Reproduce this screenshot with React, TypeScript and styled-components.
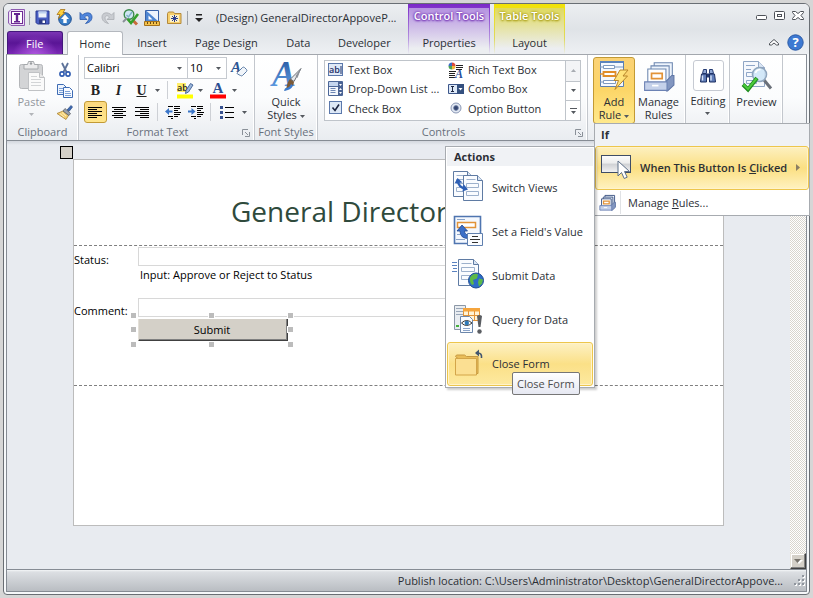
import React from "react";
import styled, { createGlobalStyle, css } from "styled-components";

const GlobalStyle = createGlobalStyle`
  * { box-sizing: border-box; }
  body {
    margin: 0;
    background: #d6d6d6;
    font-family: "Open Sans", "Noto Sans", sans-serif;
    font-size: 11px;
    line-height: 13px;
    color: #2b2f35;
  }
  button, input, select { font: inherit; color: inherit; margin: 0; }
  svg { display: block; flex: none; overflow: visible; }
`;

/* ---------- frame ---------- */

const Page = styled.div`
  min-height: 100vh;
  padding: 3px;
  display: flex;
`;

const WindowFrame = styled.div`
  flex: 1;
  min-width: 0;
  display: flex;
  flex-direction: column;
  border: 1px solid #696e74;
  border-radius: 6px 6px 4px 4px;
  background: #f6f8fa;
`;

const Body = styled.div`
  flex: 1;
  display: flex;
  flex-direction: column;
  margin: 0 2px 2px;
  border: 1px solid #868c94;
  border-top-color: #a3a7ad;
`;

/* ---------- header ---------- */

const Header = styled.header`
  display: flex;
  height: 50px;
  gap: 4px;
  border-radius: 5px 5px 0 0;
  background: linear-gradient(#eceef1, #dfe3e7 50%, #eef0f3);
`;

const HeaderMain = styled.div`
  width: 400px;
  display: flex;
  flex-direction: column;
  justify-content: space-between;
`;

const TitleBar = styled.div`
  display: flex;
  align-items: center;
  height: 27px;
  padding-left: 4px;
`;

const QuickButton = styled.button`
  width: 22px;
  height: 22px;
  padding: 0;
  border: 0;
  background: none;
  display: grid;
  place-items: center;
`;

const QuickTools = styled.div`
  display: flex;
  align-items: center;
  margin-left: 4px;
  padding: 0 2px 0 0;
`;

const Separator = styled.span<{ $h?: number }>`
  width: 1px;
  height: ${(p) => p.$h ?? 14}px;
  background: ${(p) => (p.$h ? "#cdd0d5" : "#9da2a9")};
  flex: none;
`;

const WindowTitle = styled.span`
  padding-left: 6px;
  white-space: nowrap;
`;

const TabRow = styled.nav`
  display: flex;
  height: 23px;
  padding-left: 3px;
`;

const Tab = styled.button<{ $kind?: "file" | "active"; $w: number }>`
  width: ${(p) => p.$w}px;
  height: 23px;
  padding: 0;
  border: 0;
  background: none;
  white-space: nowrap;
  ${(p) =>
    p.$kind === "file" &&
    css`
      color: #fff;
      margin-right: 4px;
      border: 1px solid #43187c;
      border-bottom: 0;
      border-radius: 3px 3px 0 0;
      background: radial-gradient(ellipse at 50% 110%, #b058e0, transparent 60%),
        linear-gradient(#7b35b4, #5a1596 50%, #7a28b4);
    `}
  ${(p) =>
    p.$kind === "active" &&
    css`
      position: relative;
      z-index: 1;
      height: 24px;
      border: 1px solid #b4b8be;
      border-bottom: 0;
      border-radius: 3px 3px 0 0;
      background: #fff;
    `}
`;

const ContextGroup = styled.div<{ $strong: string; $soft: string; $w: number }>`
  width: ${(p) => p.$w}px;
  display: flex;
  flex-direction: column;
  align-items: center;
  justify-content: space-between;
  border: 1px solid;
  border-top: 4px solid ${(p) => p.$strong};
  border-bottom: 0;
  border-image: linear-gradient(${(p) => p.$strong}, ${(p) => p.$soft} 70%, #eceef1) 4 1 0 1;
  background: linear-gradient(${(p) => p.$soft}, #eceef1 88%);
`;

const ContextTitle = styled.span<{ $glow: string }>`
  padding-top: 1px;
  color: #fff;
  font-weight: 600;
  white-space: nowrap;
  text-shadow: 0 0 2px ${(p) => p.$glow}, 0 0 3px ${(p) => p.$glow}, 0 1px 2px ${(p) => p.$glow};
`;

const HeaderSide = styled.div`
  flex: 1;
  display: flex;
  flex-direction: column;
  align-items: flex-end;
  padding: 7px 5px 3px 0;
  justify-content: space-between;
`;

const SideRow = styled.div<{ $gap: number }>`
  display: flex;
  align-items: center;
  gap: ${(p) => p.$gap}px;
`;

const PlainButton = styled.button`
  padding: 0;
  border: 0;
  background: none;
`;

/* ---------- ribbon ---------- */

const Ribbon = styled.div`
  display: flex;
  height: 86px;
  border-bottom: 1px solid #868c94;
  background: linear-gradient(#fff, #fbfcfd 50%, #e9ecf0);
`;

const Group = styled.section<{ $w: number }>`
  width: ${(p) => p.$w}px;
  flex: none;
  display: flex;
  flex-direction: column;
  justify-content: space-between;
  padding-top: 2px;
  border-right: 1px solid #c3c7cd;
  box-shadow: inset -1px 0 #fff;
`;

const GroupContent = styled.div<{ $pad?: string }>`
  display: flex;
  height: 67px;
  padding: ${(p) => p.$pad ?? "0"};
`;

const GroupLabel = styled.div<{ $launcher?: boolean }>`
  position: relative;
  height: 15px;
  padding-right: ${(p) => (p.$launcher ? 18 : 0)}px;
  text-align: center;
  white-space: nowrap;
  color: #68707c;
`;

const Launcher = styled.button`
  position: absolute;
  right: 4px;
  top: 4px;
  padding: 0;
  border: 0;
  background: none;
`;

const BigButton = styled.button<{ $w: number; $on?: boolean; $dim?: boolean }>`
  width: ${(p) => p.$w}px;
  height: 67px;
  flex: none;
  padding: 2px 0 0;
  display: flex;
  flex-direction: column;
  align-items: center;
  gap: 3px;
  border: 1px solid ${(p) => (p.$on ? "#c29a35" : "transparent")};
  border-radius: 3px;
  background: ${(p) => (p.$on ? "linear-gradient(#fbd275, #fcd668 50%, #ffe98c)" : "none")};
  color: ${(p) => (p.$dim ? "#92969c" : "inherit")};
`;

const BigText = styled.span`
  text-align: center;
  svg {
    display: inline-block;
    vertical-align: middle;
    margin-left: 3px;
  }
  br + svg { margin: 0 0 4px; }
`;

const IconColumn = styled.div`
  display: flex;
  flex-direction: column;
  justify-content: space-between;
  padding: 2px 0 1px;
`;

const FormatRows = styled.div`
  display: flex;
  flex-direction: column;
  flex: 1;
`;

const Row = styled.div`
  display: flex;
  align-items: center;
  height: 22px;
`;

const Combo = styled.label<{ $w: number }>`
  width: ${(p) => p.$w}px;
  height: 22px;
  display: flex;
  align-items: center;
  padding-right: 5px;
  border: 1px solid #c6cad0;
  background: #fff;
  & + & { border-left: 0; }
  select {
    flex: 1;
    min-width: 0;
    height: 20px;
    padding: 0 2px 2px;
    border: 0;
    background: none;
    appearance: none;
    color: #000;
  }
`;

const ToolButton = styled.button<{ $w: number; $on?: boolean }>`
  width: ${(p) => p.$w}px;
  height: 22px;
  padding: 0;
  display: flex;
  align-items: center;
  justify-content: center;
  border: 1px solid ${(p) => (p.$on ? "#c29a35" : "transparent")};
  border-radius: 3px;
  background: ${(p) => (p.$on ? "linear-gradient(#fbd87f, #ffe68c)" : "none")};
`;

const Letter = styled.span<{ $style: "bold" | "italic" | "underline" }>`
  font-family: "Liberation Serif", serif;
  font-size: 14px;
  font-weight: bold;
  color: #222;
  font-style: ${(p) => (p.$style === "italic" ? "italic" : "normal")};
  text-decoration: ${(p) => (p.$style === "underline" ? "underline" : "none")};
`;

const Gallery = styled.div`
  display: flex;
  width: 258px;
  height: 61px;
  border: 1px solid #bfc4ca;
  background: #fff;
`;

const GalleryGrid = styled.div`
  flex: 1;
  display: grid;
  grid-template-columns: 120px 1fr;
  grid-template-rows: repeat(3, 1fr);
  padding-bottom: 1px;
`;

const GalleryItem = styled.button`
  display: flex;
  align-items: center;
  gap: 4px;
  padding: 0 0 2px 3px;
  border: 0;
  background: none;
  white-space: nowrap;
`;

const GalleryScroll = styled.div`
  width: 15px;
  display: grid;
  grid-template-rows: repeat(3, 1fr);
  border-left: 1px solid #bfc4ca;
  button {
    display: grid;
    place-items: center;
    padding: 0;
    border: 0;
    background: #fff;
  }
  button + button { border-top: 1px solid #bfc4ca; }
  button:first-child { background: #f3f4f6; }
`;

const IconTile = styled.span`
  width: 31px;
  height: 31px;
  display: grid;
  place-items: center;
  border: 1px solid #c6cad2;
  border-radius: 3px;
  background: #fff;
`;

const MenuAnchor = styled.div`
  position: relative;
`;

/* ---------- menus ---------- */

const menuBox = css`
  position: absolute;
  border: 1px solid #a7abb0;
  background: #fff;
`;

const RuleMenu = styled.div`
  ${menuBox}
  z-index: 3;
  top: 66px;
  left: 1px;
  width: 216px;
`;

const ActionMenu = styled.div`
  ${menuBox}
  z-index: 4;
  top: 22px;
  right: 214px;
  width: 150px;
  padding: 1px;
  box-shadow: 2px 2px 2px rgba(0, 0, 0, 0.2);
`;

const MenuHeading = styled.div<{ $h: number; $pad: number }>`
  height: ${(p) => p.$h}px;
  line-height: ${(p) => p.$h}px;
  padding-left: ${(p) => p.$pad}px;
  font-weight: bold;
  background: #f0f2f5;
`;

const highlight = css`
  border-color: #edc64c;
  border-radius: 3px;
  background: linear-gradient(#fdf1c4, #fbe087 50%, #fde9a0);
  box-shadow: inset 0 0 0 1px #fff3cb;
`;

const RuleItem = styled.button`
  width: 100%;
  height: 44px;
  display: flex;
  align-items: center;
  gap: 7px;
  padding: 0 8px 2px 5px;
  border: 1px solid;
  font-weight: 600;
  white-space: nowrap;
  ${highlight}
  background: linear-gradient(#fdf0c0, #fbdf82 50%, #fff2c0);
  span { flex: 1; text-align: left; }
`;

const ManageItem = styled.button`
  width: 100%;
  height: 25px;
  display: flex;
  align-items: center;
  padding: 0 0 0 4px;
  border: 0;
  background: #fff;
  white-space: nowrap;
  span:last-child { padding-left: 7px; }
`;

const IconRail = styled.span`
  height: 23px;
  padding-right: 4px;
  display: flex;
  align-items: center;
  border-right: 1px solid #e0e2e5;
`;

const ActionItem = styled.button<{ $on?: boolean }>`
  width: 100%;
  height: 44px;
  display: flex;
  align-items: center;
  gap: 8px;
  padding: 0 0 2px 4px;
  border: 1px solid transparent;
  background: none;
  white-space: nowrap;
  ${(p) => p.$on && highlight}
`;

const Tooltip = styled.div`
  position: absolute;
  left: 66px;
  top: 225px;
  padding: 4px;
  border: 1px solid #767676;
  border-radius: 2px;
  background: linear-gradient(#fff, #e6e8f2);
  color: #4c4c4c;
  white-space: nowrap;
`;

/* ---------- work area ---------- */

const WorkArea = styled.main`
  flex: 1;
  display: flex;
  background: linear-gradient(#d3d7de, #e8ebf0 4px);
`;

const Canvas = styled.div`
  flex: 1;
  min-width: 0;
  display: flex;
  padding: 18px 66px 43px;
`;

const Sheet = styled.div`
  position: relative;
  flex: 1;
  min-width: 0;
  border: 1px solid #bcbcbc;
  background: #fff;
  color: #000;
`;

const SheetHandle = styled.span`
  position: absolute;
  left: -14px;
  top: -14px;
  width: 13px;
  height: 13px;
  border: 1px solid #000;
  background: #d4d0c8;
`;

const FormTitle = styled.h1`
  margin: 0;
  height: 85px;
  padding: 33px 0 0 157px;
  font-size: 28px;
  line-height: 36px;
  font-weight: normal;
  color: #2f4a3c;
  white-space: nowrap;
`;

const FormGrid = styled.form`
  height: 141px;
  display: grid;
  grid-template-columns: 64px minmax(0, 450px);
  grid-template-rows: 51px 1fr;
  padding-top: 1px;
  border-top: 1px dashed #808080;
  border-bottom: 1px dashed #808080;
`;

const FieldLabel = styled.label`
  padding-top: 6px;
`;

const Field = styled.input`
  display: block;
  width: 100%;
  height: 19px;
  padding: 0 2px;
  border: 1px solid #d8d8d8;
  background: #fff;
`;

const Hint = styled.div`
  padding: 2px 0 0 2px;
`;

const Selection = styled.div`
  position: relative;
  width: 150px;
  margin-top: 2px;
`;

const SubmitButton = styled.button`
  display: block;
  width: 100%;
  height: 22px;
  padding: 0 2px 0 0;
  border: solid;
  border-width: 0 1px 1px 1px;
  border-color: #d4d0c8 #404040 #404040 #e4e0d8;
  box-shadow: inset -1px -1px #808080;
  background: #d4d0c8;
`;

const Grip = styled.i<{ $x: number; $y: number }>`
  position: absolute;
  left: ${(p) => p.$x}%;
  top: ${(p) => p.$y}%;
  width: 5px;
  height: 5px;
  margin: ${(p) => (p.$y === 0 ? -6 : p.$y === 100 ? 1 : -3)}px 0 0
    ${(p) => (p.$x === 0 ? -7 : p.$x === 100 ? 0 : -4)}px;
  background: #bcbcbc;
  outline: 1px solid #fff;
`;

const ScrollTrack = styled.div`
  width: 16px;
  display: flex;
  flex-direction: column;
  justify-content: flex-end;
  background: repeating-conic-gradient(#d8d5ce 0 25%, #fff 0 50%) 0 0 / 2px 2px;
`;

const ScrollButton = styled.button`
  height: 16px;
  padding: 0;
  display: grid;
  place-items: center;
  border: 1px solid;
  border-color: #e8e5de #404040 #404040 #e8e5de;
  box-shadow: inset -1px -1px #808080, inset 1px 1px #fff;
  background: #d4d0c8;
`;

const StatusBar = styled.footer`
  height: 22px;
  display: flex;
  align-items: center;
  justify-content: flex-end;
  gap: 11px;
  padding-bottom: 1px;
  border-top: 1px solid #868c94;
  background: linear-gradient(#f4f6f8, #dcdfe3 2px, #b9bdc2);
  white-space: nowrap;
`;

/* ---------- icons ---------- */

const Arrow = ({ color = "#55595f" }: { color?: string }) => (
  <svg width="5" height="3" viewBox="0 0 5 3"><path d="M0 0h5L2.500 3z" fill={color} /></svg>
);

const Sheetlet = ({ x, y, w = 19, h = 23 }: { x: number; y: number; w?: number; h?: number }) => (
  <g transform={`translate(${x} ${y})`}>
    <path d={`M.5.5h${w - 6}l5 5v${h - 6}h-${w - 1}z`} fill="#fafcff" stroke="#5f7ba3" />
    <path d={`M${w - 5.5}.5v5h5`} fill="#dbe6f4" stroke="#5f7ba3" />
    <path d={`M3.500 4.500h${w - 11}M3.500 8.500h${w - 8}v4h-${w - 8}zM3.500 16.500h${w - 8}v4h-${w - 8}z`} fill="none" stroke="#9db1cc" />
  </g>
);

const LogoIcon = () => (
  <svg width="17" height="17" viewBox="0 0 17 17">
    <path d="M3 .5h13.500v16H3L.5 14V3z" fill="#ecdff5" stroke="#8d5ab0" />
    <rect x="3.500" y="2.500" width="11" height="12" fill="#fff" stroke="#6d2a94" />
    <path d="M6 4h6v2h-1.800v6H12v1.500H6V12h1.800V6H6z" fill="#642390" />
  </svg>
);
const SaveIcon = () => (
  <svg width="15" height="15" viewBox="0 0 15 15">
    <path d="M1 1h13v13H2.500L1 12.500z" fill="#4a5fc4" stroke="#2b3a92" />
    <path d="M3.500 1.500h8v6h-8z" fill="#eef3fb" />
    <path d="M3.500 1.500h8v2h-8z" fill="#bdd0ee" />
    <path d="M4 9.500h7V14H4z" fill="#2c3a86" /><path d="M7.500 10.500H10V13H7.500z" fill="#fff" />
  </svg>
);
const PublishIcon = () => (
  <svg width="16" height="17" viewBox="0 0 16 17">
    <circle cx="9" cy="10" r="6.300" fill="#3a7fc8" stroke="#1c4d92" />
    <path d="M9 5.500l4 4.500h-2.300v4H7.300v-4H5z" fill="#fff" />
    <path d="M4.500 .5h4.500L7 3.500H9L2.500 9.500 4 5.500H1z" fill="#ffd23c" stroke="#a5721b" strokeWidth=".8" />
  </svg>
);
const UndoIcon = ({ color, edge, flip }: { color: string; edge: string; flip?: boolean }) => (
  <svg width="14" height="14" viewBox="0 0 14 14">
    <g transform={flip ? "translate(14 0) scale(-1 1)" : undefined}>
      <path d="M1 1.500v7h7L5.500 6C7.500 4 10 4.500 10 7c0 2-1.500 3.500-3.500 5.500 4-.8 6.500-3 6.500-6.500C13 1.500 7.500.3 3.500 4z" fill={color} stroke={edge} strokeWidth=".8" />
    </g>
  </svg>
);
const SpellIcon = () => (
  <svg width="17" height="17" viewBox="0 0 17 17">
    <circle cx="7" cy="5.500" r="4.800" fill="#cfe6f3" stroke="#3b8a4c" strokeWidth="1.400" />
    <path d="M4.500 6l2 2 3.500-5" fill="none" stroke="#7fb0c8" strokeWidth="1.400" />
    <path d="M1 13l4-4" stroke="#8a9099" strokeWidth="2" />
    <path d="M10.500 11l4.500 4.500" stroke="#c76a3c" strokeWidth="3" />
    <path d="M5.500 10l3.500 4L16 5" fill="none" stroke="#34a02c" strokeWidth="2.600" />
  </svg>
);
const DesignIcon = () => (
  <svg width="17" height="17" viewBox="0 0 17 17">
    <path d="M1.500 1.500h13v11h-13z" fill="#eef4fd" stroke="#3a62a8" />
    <path d="M14 12L2 1.500V12z" fill="#4f86d2" /><path d="M4.500 10.500v-4l4 4z" fill="#fff" />
    <path d="M.5 12.500h15v4H.5z" fill="#f3c14b" stroke="#a5721b" />
    <path d="M3.500 13v2M6.500 13v2M9.500 13v2M12.500 13v2" stroke="#6b4a10" />
  </svg>
);
const FolderStarIcon = () => (
  <svg width="17" height="14" viewBox="0 0 17 14">
    <path d="M1.500 2.500l1-1.500h5l1 1.500h6.500v10h-13.500z" fill="#f6cf6d" stroke="#b4893a" />
    <rect x="4" y="4" width="9" height="7" fill="#fdf1c6" />
    <path d="M8.500 4v7M5 7.500h7M6 5l5 5M11 5l-5 5" stroke="#2a3f8f" />
  </svg>
);
const CustomizeIcon = () => (
  <svg width="8" height="8" viewBox="0 0 8 8"><path d="M1 0h6v1.500H1zM0 4h8L4 8z" fill="#222" /></svg>
);
const MinIcon = () => (
  <svg width="12" height="8" viewBox="0 0 12 8"><rect x=".5" y="3.500" width="10" height="4" rx="1" fill="#fff" stroke="#4c5057" /></svg>
);
const MaxIcon = () => (
  <svg width="12" height="9" viewBox="0 0 12 9"><rect x=".5" y=".5" width="10" height="8" rx="1" fill="#fff" stroke="#4c5057" /><rect x="3.500" y="3.500" width="4" height="2" fill="#fff" stroke="#4c5057" /></svg>
);
const CloseIcon = () => (
  <svg width="12" height="9" viewBox="0 0 12 9">
    <path d="M.5.5h3l2.500 2 2.500-2h3v1L9 4.500l2.500 3v1h-3L6 6.500l-2.500 2h-3v-1L3 4.500.500 1.500z" fill="#fff" stroke="#4c5057" />
  </svg>
);
const ChevronIcon = () => (
  <svg width="10" height="7" viewBox="0 0 10 7"><path d="M.5 4.500L5 .5l4.500 4v1.500h-2L5 4 2.500 6h-2z" fill="#fff" stroke="#4c5057" /></svg>
);
const HelpIcon = () => (
  <svg width="17" height="17" viewBox="0 0 17 17">
    <circle cx="8.500" cy="8.500" r="7.700" fill="#3d79d2" stroke="#2a5aa6" />
    <text x="8.500" y="13" textAnchor="middle" fontSize="13" fontWeight="bold" fill="#fff">?</text>
  </svg>
);
const PasteIcon = () => (
  <svg width="28" height="32" viewBox="0 0 28 32">
    <rect x="1.500" y="4.500" width="23" height="24" rx="2" fill="#d3d4d6" stroke="#b4b6b9" />
    <path d="M6 4.500h3.500l1-3h5l1 3H20V9H6z" fill="#ebebec" stroke="#a5a8ab" />
    <circle cx="13" cy="3.500" r="1.200" fill="#999ca0" />
    <path d="M10.500 12.500h11l5 5v13h-16z" fill="#fafafa" stroke="#c0c2c5" />
    <path d="M21.500 12.500v5h5" fill="#e8e8e8" stroke="#c0c2c5" />
    <path d="M13 16.500h6M13 19.500h10M13 22.500h10M13 25.500h10" stroke="#d2d4d6" />
  </svg>
);
const CutIcon = () => (
  <svg width="16" height="16" viewBox="0 0 16 16">
    <path d="M5 1l4.500 9M11 1L6.500 10" stroke="#5d7299" strokeWidth="1.800" />
    <circle cx="5" cy="12" r="2.100" fill="none" stroke="#2f5bb0" strokeWidth="1.600" />
    <circle cx="11" cy="12" r="2.100" fill="none" stroke="#2f5bb0" strokeWidth="1.600" />
  </svg>
);
const CopyIcon = () => (
  <svg width="16" height="14" viewBox="0 0 16 14">
    <path d="M.5.5h6l3 3v7h-9z" fill="#eef4fd" stroke="#3e6cb4" /><path d="M2 4.500h5M2 6.500h4M2 8.500h4" stroke="#7ca0d6" />
    <path d="M6.500 3.500h6l3 3v7h-9z" fill="#f7faff" stroke="#3e6cb4" /><path d="M8 7.500h5M8 9.500h6M8 11.500h6" stroke="#7ca0d6" />
  </svg>
);
const BrushIcon = () => (
  <svg width="16" height="15" viewBox="0 0 16 15">
    <path d="M10 5l4-4.500 1.500 1.500L12 6.500z" fill="#3d69b3" stroke="#27497f" strokeWidth=".7" />
    <path d="M6 6l5.500 4.500L9 14.500 0 8.500z" fill="#f4cf73" stroke="#a98436" strokeWidth=".8" />
    <path d="M3 8.500l4 3.500M5 7.500l4 3.500" stroke="#fdf0bf" />
    <path d="M8 3.500l5.500 5-1.500 2L6 6z" fill="#9aa1ac" stroke="#5a5f68" strokeWidth=".8" />
  </svg>
);
const ClearIcon = () => (
  <svg width="17" height="17" viewBox="0 0 17 17">
    <text x="0" y="12" fontFamily="Liberation Serif" fontStyle="italic" fontWeight="bold" fontSize="15" fill="#2c5694">A</text>
    <path d="M6.500 12.500l5-5q1-.8 2 0l2 2q.8 1 0 2l-4 4q-1 .8-2 0l-3-1.500q-.8-.8 0-1.500z" fill="#f1f5fa" stroke="#5a7ba5" />
  </svg>
);
const HighlightIcon = () => (
  <svg width="18" height="17" viewBox="0 0 18 17">
    <rect x="1" y="1" width="9" height="9" fill="#ffee6a" />
    <text x="1" y="9" fontSize="9" fontWeight="600" fill="#222">ab</text>
    <path d="M10 8.500l4.500-7 2.500 1.500-4.500 7-3 1.500z" fill="#9cb6da" stroke="#3d5e92" strokeWidth=".9" />
    <path d="M1 12.500h16v4H1z" fill="#ffff00" />
  </svg>
);
const FontColorIcon = () => (
  <svg width="16" height="17" viewBox="0 0 16 17">
    <text x="8" y="11" textAnchor="middle" fontFamily="Liberation Serif" fontWeight="bold" fontSize="15" fill="#2c4f92">A</text>
    <path d="M0 12.500h16v4H0z" fill="#ff0000" />
  </svg>
);
const AlignIcon = ({ mode }: { mode: "left" | "center" | "right" }) => (
  <svg width="15" height="13" viewBox="0 0 15 13" shapeRendering="crispEdges">
    {[14, 9, 14, 9, 14, 9].map((w, i) => {
      const x = mode === "left" ? 0 : mode === "right" ? 14 - w : Math.floor((14 - w) / 2);
      return <rect key={i} x={x} y={i * 2 + 1} width={w} height="1" fill="#000" />;
    })}
  </svg>
);
const IndentIcon = ({ out }: { out?: boolean }) => (
  <svg width="17" height="14" viewBox="0 0 17 14" shapeRendering="crispEdges">
    <path d="M3 1.500h5M9 1.500h6M9 3.500h6M9 5.500h4M9 7.500h7M9 9.500h6M3 11.500h5M9 11.500h4M6 13.500h2" stroke="#000" />
    <path d={out ? "M0 6.500L4 3v2.500h3.500v2H4V10z" : "M7.500 6.500L3.500 3v2.500H0v2h3.500V10z"} fill="#3b76c8" shapeRendering="auto" />
  </svg>
);
const BulletsIcon = () => (
  <svg width="14" height="13" viewBox="0 0 14 13">
    <path d="M5 1.500h9M5 6.500h9M5 11.500h9" stroke="#000" />
    <path d="M0 0h3v3H0zM0 5h3v3H0zM0 10h3v3H0z" fill="#35508f" />
  </svg>
);
const LauncherIcon = () => (
  <svg width="8" height="8" viewBox="0 0 8 8"><path d="M.5 6V.5H6M3 3l3 3M7.500 3v4.500H3" fill="none" stroke="#8a9098" /></svg>
);
const QuickStylesIcon = () => (
  <svg width="32" height="32" viewBox="0 0 32 32">
    <defs><linearGradient id="qs" x1="0" y1="0" x2="0" y2="1"><stop offset="0" stopColor="#1f4f98" /><stop offset="1" stopColor="#6aaaf0" /></linearGradient></defs>
    <text x="2" y="26" fontFamily="Liberation Serif" fontWeight="bold" fontStyle="italic" fontSize="36" fill="url(#qs)">A</text>
    <path d="M31 8.500l-7 13-3.500-2.500z" fill="#e7e9ec" stroke="#6a6f76" />
    <path d="M31 8.500l-5.500 7.500 2 2z" fill="#8c9199" />
    <path d="M20 19l4 3q0 6-9 8.500-1-.5 1.500-3 1-6 3.500-8.500z" fill="#7b5a38" />
    <path d="M15 28.500q5-1 6-4.500l2 1.500q-2 4.500-9 5.500z" fill="#3a7bd0" />
  </svg>
);
const AbIcon = () => (
  <svg width="16" height="14" viewBox="0 0 16 14"><rect x=".5" y=".5" width="14" height="12" fill="#dfe9f7" stroke="#5b78ab" /><text x="1" y="10" fontSize="9" fill="#1d2f66" fontWeight="600">ab</text><path d="M13 3v8" stroke="#1d2f66" /></svg>
);
const DropIcon = () => (
  <svg width="16" height="15" viewBox="0 0 16 15">
    <path d="M.5.500h14v14H.5z" fill="#f3f7fd" stroke="#4c6798" /><path d="M1 1h9v4H1z" fill="#c4d5ee" />
    <path d="M1 5.500h13" stroke="#4c6798" />
    <path d="M2.500 7.500h5M2.500 9.500h5M2.500 11.500h5" stroke="#6d86b4" /><path d="M10 1h5v13h-5z" fill="#4a6394" />
    <path d="M11 3h3l-1.500 2zM11 9h3l-1.500-2zM11 11h3l-1.500 2z" fill="#fff" />
  </svg>
);
const CheckIcon = () => (
  <svg width="16" height="14" viewBox="0 0 16 14"><rect x="1.500" y=".5" width="12" height="12" fill="#dde8f6" stroke="#5b78ab" /><path d="M4.500 6.500l2.500 3 4-6" fill="none" stroke="#1b2440" strokeWidth="1.600" /></svg>
);
const RichIcon = () => (
  <svg width="16" height="16" viewBox="0 0 16 16">
    <path d="M8 3.500h7M8 5.500h7M1 9.500h7M1 11.500h6M1 13.500h6M8 7.500h6M1 15.500h6" stroke="#222" />
    <path d="M4 4V.5a3.500 3.500 0 0 1 3.500 3.500z" fill="#dd4b3b" /><path d="M4 4H.5A3.500 3.500 0 0 1 4 .5z" fill="#3f6fc4" />
    <path d="M4 4v3.500A3.500 3.500 0 0 1 .5 4z" fill="#49a352" /><path d="M4 4h3.500A3.500 3.500 0 0 1 4 7.500z" fill="#f0b73b" />
    <text x="7" y="16" fontFamily="Liberation Serif" fontStyle="italic" fontWeight="bold" fontSize="12" fill="#274f9c">A</text>
  </svg>
);
const ComboIcon = () => (
  <svg width="16" height="10" viewBox="0 0 16 10"><path d="M.5.5h15v9H.5z" fill="#dce8f7" stroke="#3d568a" /><path d="M9 0h7v10H9z" fill="#34507f" /><path d="M10.500 4h4l-2 2.500z" fill="#fff" /><path d="M3 2.500h3M4.500 2.500v5M3 7.500h3" stroke="#1b2440" /></svg>
);
const OptionIcon = () => (
  <svg width="16" height="14" viewBox="0 0 16 14"><circle cx="8" cy="7" r="5" fill="#e2e8f2" stroke="#8a97b4" /><circle cx="8" cy="7" r="2.400" fill="#34456f" stroke="#6f80a6" strokeWidth=".8" /></svg>
);
const AddRuleIcon = () => (
  <svg width="32" height="32" viewBox="0 0 32 32">
    <path d="M2.500 1.500h23v25h-23z" fill="#f4f8fe" stroke="#5c7fae" />
    <path d="M2 1h24v2H2z" fill="#5c84bd" />
    <path d="M5.500 5.500h11v3h-11z" fill="#fff" stroke="#7e99bf" /><path d="M2 7h3M17 7h8" stroke="#7e99bf" />
    <path d="M5.500 12h12v4h-12z" fill="#fff" stroke="#e08d28" strokeWidth="1.800" /><path d="M2 14h3" stroke="#e08d28" strokeWidth="1.400" />
    <path d="M5.500 20.500h12v3h-12z" fill="#fff" stroke="#7e99bf" /><path d="M2 22h3" stroke="#7e99bf" />
    <path d="M22 10h8l-5 6h4.500L17 29.500l3.500-9H16z" fill="#ffe37a" stroke="#b8862a" />
  </svg>
);
const ManageRulesIcon = ({ size, edge = "#6d87b0", weight = 1 }: { size: number; edge?: string; weight?: number }) => (
  <svg width={size} height={size} viewBox="0 0 30 30" strokeWidth={weight}>
    <path d="M10.500 2.500h17v18h-17z" fill="#eef4fc" stroke={edge} />
    <path d="M7.500 5.500h17v17h-17z" fill="#eef4fc" stroke={edge} />
    <path d="M4.500 8.500h17v17h-17z" fill="#fff" stroke={edge} />
    <path d="M8 12.500h10v5H8z" fill="#fff" stroke="#e29338" strokeWidth={weight + 0.6} />
    <path d="M22 19.500l5-5h2v9l-6 5.500h-1z" fill="#8296c0" stroke="#6076a6" />
    <path d="M1.500 20.500h21v8h-21z" fill="#c5d1ea" stroke="#6c82b4" /><path d="M8.500 24h6" stroke="#fff" strokeWidth="1.600" />
  </svg>
);
const BinocularsIcon = () => (
  <svg width="16" height="15" viewBox="0 0 16 15">
    <path d="M3.500 1.500h3v4h-4zM9.500 1.500h3l1 4h-4z" fill="#8fa7d4" stroke="#253b73" />
    <path d="M1.500 6h5v8h-6zM9.500 6h5l1 8h-6z" fill="#5f7cb8" stroke="#1d2f60" /><path d="M7 5.500h2v4H7z" fill="#253b73" />
    <path d="M2.500 7.500v5M11 7.500v5" stroke="#d5e2f5" strokeWidth="1.400" />
  </svg>
);
const PreviewIcon = () => (
  <svg width="32" height="32" viewBox="0 0 32 32">
    <path d="M2.500 1.500h15l6 6v19h-21z" fill="#f5f8fd" stroke="#8fa5c4" /><path d="M17.500 1.500v6h6" fill="#dbe6f4" stroke="#8fa5c4" />
    <path d="M5 5.500h9M5 9.500h5M5.500 12.500h7v4h-7zM5.500 20.500h10v3h-10z" stroke="#8fa6c8" fill="none" />
    <path d="M23 20l7 8.500" stroke="#6a7079" strokeWidth="3" />
    <circle cx="18.500" cy="14.500" r="7" fill="#cfe5f7" fillOpacity=".9" stroke="#8fa5bd" strokeWidth="1.600" />
    <path d="M14.500 13q1-3.500 5-3.500" fill="none" stroke="#fff" strokeWidth="1.600" />
    <path d="M2 24.500l5 5L16 18" fill="none" stroke="#1f8c20" strokeWidth="4" />
    <path d="M2.500 24.500l4.500 4.500L15.500 18.500" fill="none" stroke="#4ccc3c" strokeWidth="2" />
  </svg>
);
const ClickIcon = () => (
  <svg width="32" height="28" viewBox="0 0 32 28">
    <defs><linearGradient id="ck" x1="0" y1="0" x2="0" y2="1"><stop offset="0" stopColor="#fdfdfd" /><stop offset=".45" stopColor="#eceded" /><stop offset=".5" stopColor="#cfd1d4" /><stop offset="1" stopColor="#f3f3f4" /></linearGradient></defs>
    <rect x=".5" y="2.500" width="29" height="17" fill="url(#ck)" stroke="#3f4d66" />
    <path d="M17 8v15l3.500-3.500 2.700 6 3-1.300-2.700-5.700H28.500z" fill="#fff" stroke="#5e7088" />
  </svg>
);
const SwitchIcon = () => (
  <svg width="32" height="32" viewBox="0 0 32 32">
    <Sheetlet x={1} y={0} w={20} h={26} /><Sheetlet x={11} y={4} w={20} h={26} />
    <path d="M6 10q0 6 8 8" fill="none" stroke="#2d5fb5" strokeWidth="2.200" />
    <path d="M2.500 12.500l3-5.500 5 4.500zM11.500 13l4.500 5.500-5.500 2z" fill="#2d5fb5" />
  </svg>
);
const SetValueIcon = () => (
  <svg width="32" height="32" viewBox="0 0 32 32">
    <path d="M2.500 1.500h26v27h-26z" fill="#f4f8fe" stroke="#4f75b0" strokeWidth="1.600" />
    <path d="M5 4.500h8M5 15.500h3M5 19.500h3M4 24.500h9" stroke="#8aa3c8" />
    <path d="M5.500 7.500h18v5h-18z" fill="#fff" stroke="#e29338" strokeWidth="1.500" />
    <path d="M10 10l5.500 6h-3q0 4 5 4.500v3Q8 24 8 16H5z" fill="#3b6fc8" stroke="#1f4690" strokeWidth=".8" />
    <path d="M15.500 18.500h15v12h-15z" fill="#fafcff" stroke="#5f7fae" /><path d="M20 21.500h6M18 24.500h10M20 27.500h6" stroke="#333" />
  </svg>
);
const SubmitDataIcon = () => (
  <svg width="32" height="32" viewBox="0 0 32 32">
    <Sheetlet x={6} y={0} w={21} h={27} />
    <path d="M0 3.500h5M0 6.500h5M1 9.500h4M0 12.500h5" stroke="#5a82c0" />
    <circle cx="24" cy="21.500" r="7.500" fill="#2c6cc8" stroke="#1d4a92" />
    <path d="M19 17q4-3.500 7-1.500l-1 4-4 1.500 1 4-2 1q-4-5-1-9zM27 19.500l4 1-1 4-3 3-1-4z" fill="#5cb947" />
  </svg>
);
const QueryIcon = () => (
  <svg width="32" height="32" viewBox="0 0 32 32">
    <path d="M2.500 2.500h11v24h-11z" fill="#e9edf1" stroke="#8b97a6" /><path d="M4 5.500h8M4 8.500h8M4 11.500h8" stroke="#9aa7b8" />
    <path d="M11.500 5.500h16v12h-16z" fill="#fff3d6" stroke="#e29338" /><path d="M11 5h17v3.500H11z" fill="#f5a53d" /><path d="M11.500 12.500h16M16.500 8v9M22.500 8v9" stroke="#e29338" />
    <path d="M8.500 13.500h9l3 3v13h-12z" fill="#fafcff" stroke="#6c87ab" />
    <path d="M9.500 20q5-5 10.500 0-5.500 5-10.500 0z" fill="#fff" stroke="#333" /><circle cx="14.800" cy="20" r="2.200" fill="#2d79b8" />
    <path d="M11 25.500h7M11 27.500h7" stroke="#8aa3c8" /><path d="M4 22h3v2H4z" fill="#46b13c" />
    <path d="M25 13q2.500-2 5 0l-1.500 11h-2z" fill="#5a5d62" /><circle cx="27.500" cy="28.500" r="2.200" fill="#5a5d62" />
  </svg>
);
const CloseFormIcon = () => (
  <svg width="32" height="32" viewBox="0 0 32 32">
    <path d="M3.500 9.500l1-1.500h8l2 1.500h11.500v17h-1z" fill="#e9bd59" stroke="#c79a42" />
    <path d="M3.500 11.500h21v16.500h-21z" fill="#fbdf92" stroke="#d3a549" />
    <path d="M26 6q4 0 3.500 5" fill="none" stroke="#41556f" strokeWidth="1.600" /><path d="M23 6l4-3.500v7z" fill="#41556f" />
  </svg>
);
const GripIcon = () => (
  <svg width="12" height="12" viewBox="0 0 12 12">
    {[[8, 1], [4, 5], [8, 5], [0, 9], [4, 9], [8, 9]].map(([x, y]) => (
      <g key={`${x}-${y}`}><rect x={x + 1} y={y + 1} width="2" height="2" fill="#fff" /><rect x={x} y={y} width="2" height="2" fill="#8f959d" /></g>
    ))}
  </svg>
);

/* ---------- data ---------- */

const quickTools = [
  { name: "Save", icon: <SaveIcon /> },
  { name: "Publish", icon: <PublishIcon /> },
  { name: "Undo", icon: <UndoIcon color="#4f86dd" edge="#2a58a8" /> },
  { name: "Redo", icon: <UndoIcon color="#c9ccd1" edge="#a9adb3" flip /> },
  { name: "Check form", icon: <SpellIcon /> },
  { name: "Design", icon: <DesignIcon /> },
  { name: "Open", icon: <FolderStarIcon /> },
];

const controls = [
  { name: "Text Box", icon: <AbIcon /> },
  { name: "Rich Text Box", icon: <RichIcon /> },
  { name: "Drop-Down List ...", icon: <DropIcon /> },
  { name: "Combo Box", icon: <ComboIcon /> },
  { name: "Check Box", icon: <CheckIcon /> },
  { name: "Option Button", icon: <OptionIcon /> },
];

const actions = [
  { name: "Switch Views", icon: <SwitchIcon /> },
  { name: "Set a Field's Value", icon: <SetValueIcon /> },
  { name: "Submit Data", icon: <SubmitDataIcon /> },
  { name: "Query for Data", icon: <QueryIcon /> },
  { name: "Close Form", icon: <CloseFormIcon />, on: true },
];

const grips = [[0, 0], [50, 0], [100, 0], [0, 50], [100, 50], [0, 100], [50, 100], [100, 100]];

/* ---------- sections ---------- */

function AppHeader() {
  return (
    <Header>
      <HeaderMain>
        <TitleBar>
          <LogoIcon />
          <QuickTools>
            <Separator />
            <Separator as="i" $h={1} />
            {quickTools.map((t) => (
              <QuickButton key={t.name} aria-label={t.name}>{t.icon}</QuickButton>
            ))}
          </QuickTools>
          <Separator />
          <QuickButton aria-label="Customize"><CustomizeIcon /></QuickButton>
          <WindowTitle>(Design) GeneralDirectorAppoveP...</WindowTitle>
        </TitleBar>
        <TabRow>
          <Tab $kind="file" $w={56}>File</Tab>
          <Tab $kind="active" $w={57}>Home</Tab>
          <Tab $w={58}>Insert</Tab>
          <Tab $w={92}>Page Design</Tab>
          <Tab $w={53}>Data</Tab>
          <Tab $w={80}>Developer</Tab>
        </TabRow>
      </HeaderMain>
      <ContextGroup $strong="#7a28c8" $soft="#b592e0" $w={82}>
        <ContextTitle $glow="#7330b4">Control Tools</ContextTitle>
        <Tab $w={80}>Properties</Tab>
      </ContextGroup>
      <ContextGroup $strong="#f2e205" $soft="#dfd95e" $w={71}>
        <ContextTitle $glow="#a89c12">Table Tools</ContextTitle>
        <Tab $w={69}>Layout</Tab>
      </ContextGroup>
      <HeaderSide>
        <SideRow $gap={6}>
          <PlainButton aria-label="Minimize"><MinIcon /></PlainButton>
          <PlainButton aria-label="Restore"><MaxIcon /></PlainButton>
          <PlainButton aria-label="Close"><CloseIcon /></PlainButton>
        </SideRow>
        <SideRow $gap={8}>
          <PlainButton aria-label="Collapse ribbon"><ChevronIcon /></PlainButton>
          <PlainButton aria-label="Help"><HelpIcon /></PlainButton>
        </SideRow>
      </HeaderSide>
    </Header>
  );
}

function FormatGroup() {
  return (
    <Group $w={176}>
      <GroupContent $pad="0 4px 0 5px">
        <FormatRows>
          <Row>
            <Combo $w={104}>
              <select aria-label="Font"><option>Calibri</option></select><Arrow />
            </Combo>
            <Combo $w={39}>
              <select aria-label="Font size"><option>10</option></select><Arrow />
            </Combo>
            <ToolButton $w={24} aria-label="Clear formatting"><ClearIcon /></ToolButton>
          </Row>
          <Row>
            <ToolButton $w={23}><Letter $style="bold">B</Letter></ToolButton>
            <ToolButton $w={23}><Letter $style="italic">I</Letter></ToolButton>
            <ToolButton $w={23}><Letter $style="underline">U</Letter></ToolButton>
            <ToolButton $w={9} aria-label="Underline style"><Arrow /></ToolButton>
            <ToolButton as="span" $w={11}><Separator $h={18} /></ToolButton>
            <ToolButton $w={23} aria-label="Highlight"><HighlightIcon /></ToolButton>
            <ToolButton $w={9} aria-label="Highlight colors"><Arrow /></ToolButton>
            <ToolButton $w={25} aria-label="Font color"><FontColorIcon /></ToolButton>
            <ToolButton $w={9} aria-label="Font colors"><Arrow /></ToolButton>
          </Row>
          <Row>
            <ToolButton $w={23} $on aria-label="Align left"><AlignIcon mode="left" /></ToolButton>
            <ToolButton $w={24} aria-label="Center"><AlignIcon mode="center" /></ToolButton>
            <ToolButton $w={23} aria-label="Align right"><AlignIcon mode="right" /></ToolButton>
            <ToolButton as="span" $w={6}><Separator $h={18} /></ToolButton>
            <ToolButton $w={26} aria-label="Decrease indent"><IndentIcon out /></ToolButton>
            <ToolButton $w={20} aria-label="Increase indent"><IndentIcon /></ToolButton>
            <ToolButton as="span" $w={8}><Separator $h={18} /></ToolButton>
            <ToolButton $w={26} aria-label="Bullets"><BulletsIcon /></ToolButton>
            <ToolButton $w={9} aria-label="Bullet styles"><Arrow /></ToolButton>
          </Row>
        </FormatRows>
      </GroupContent>
      <GroupLabel $launcher>Format Text<Launcher aria-label="Format text options"><LauncherIcon /></Launcher></GroupLabel>
    </Group>
  );
}

function Menus() {
  return (
    <RuleMenu role="menu">
      <MenuHeading $h={22} $pad={6}>If</MenuHeading>
      <RuleItem role="menuitem">
        <ClickIcon />
        <span>When This Button Is <u>C</u>licked</span>
        <svg width="4" height="7" viewBox="0 0 4 7"><path d="M0 0l4 3.500L0 7z" fill="#8b7d63" /></svg>
      </RuleItem>
      <ManageItem role="menuitem">
        <IconRail><ManageRulesIcon size={17} edge="#37507f" weight={1.6} /></IconRail>
        <span>Manage <u>R</u>ules...</span>
      </ManageItem>
      <ActionMenu role="menu">
        <MenuHeading $h={18} $pad={7}>Actions</MenuHeading>
        {actions.map((a) => (
          <ActionItem key={a.name} $on={a.on} role="menuitem">{a.icon}<span>{a.name}</span></ActionItem>
        ))}
        <Tooltip role="tooltip">Close Form</Tooltip>
      </ActionMenu>
    </RuleMenu>
  );
}

function AppRibbon() {
  return (
    <Ribbon>
      <Group $w={72}>
        <GroupContent $pad="0 6px 0 2px">
          <BigButton $w={45} $dim>
            <PasteIcon />
            <BigText>Paste<br /><Arrow color="#b2b5b9" /></BigText>
          </BigButton>
          <IconColumn>
            <QuickButton aria-label="Cut"><CutIcon /></QuickButton>
            <QuickButton aria-label="Copy"><CopyIcon /></QuickButton>
            <QuickButton aria-label="Format painter"><BrushIcon /></QuickButton>
          </IconColumn>
        </GroupContent>
        <GroupLabel>Clipboard</GroupLabel>
      </Group>
      <FormatGroup />
      <Group $w={63}>
        <GroupContent $pad="0 6px">
          <BigButton $w={50}>
            <QuickStylesIcon />
            <BigText>Quick Styles<Arrow /></BigText>
          </BigButton>
        </GroupContent>
        <GroupLabel>Font Styles</GroupLabel>
      </Group>
      <Group $w={270}>
        <GroupContent $pad="3px 6px">
          <Gallery>
            <GalleryGrid>
              {controls.map((c) => (
                <GalleryItem key={c.name}>{c.icon}{c.name}</GalleryItem>
              ))}
            </GalleryGrid>
            <GalleryScroll>
              <button aria-label="Scroll up"><svg width="5" height="3"><path d="M0 3h5L2.500 0z" fill="#a8acb2" /></svg></button>
              <button aria-label="Scroll down"><Arrow /></button>
              <button aria-label="More controls"><svg width="7" height="6"><path d="M0 0h7v1H0zM1 3h5L3.500 6z" fill="#55595f" /></svg></button>
            </GalleryScroll>
          </Gallery>
        </GroupContent>
        <GroupLabel $launcher>Controls<Launcher aria-label="Control options"><LauncherIcon /></Launcher></GroupLabel>
      </Group>
      <Group $w={98}>
        <GroupContent $pad="0 0 0 5px">
          <MenuAnchor>
            <BigButton $w={42} $on>
              <AddRuleIcon />
              <BigText>Add Rule<Arrow /></BigText>
            </BigButton>
            <Menus />
          </MenuAnchor>
          <BigButton $w={47}>
            <ManageRulesIcon size={32} />
            <BigText>Manage Rules</BigText>
          </BigButton>
        </GroupContent>
      </Group>
      <Group $w={44}>
        <GroupContent>
          <BigButton $w={44}>
            <IconTile><BinocularsIcon /></IconTile>
            <BigText>Editing<br /><Arrow /></BigText>
          </BigButton>
        </GroupContent>
      </Group>
      <Group $w={53}>
        <GroupContent>
          <BigButton $w={53}>
            <PreviewIcon />
            <BigText>Preview</BigText>
          </BigButton>
        </GroupContent>
      </Group>
    </Ribbon>
  );
}

function Designer() {
  return (
    <WorkArea>
      <Canvas>
        <Sheet>
          <SheetHandle />
          <FormTitle>General Director</FormTitle>
          <FormGrid onSubmit={(e) => e.preventDefault()}>
            <FieldLabel htmlFor="status">Status:</FieldLabel>
            <div>
              <Field id="status" type="text" />
              <Hint>Input: Approve or Reject to Status</Hint>
            </div>
            <FieldLabel htmlFor="comment">Comment:</FieldLabel>
            <div>
              <Field id="comment" type="text" />
              <Selection>
                <SubmitButton type="submit">Submit</SubmitButton>
                {grips.map(([x, y]) => <Grip key={`${x}-${y}`} $x={x} $y={y} />)}
              </Selection>
            </div>
          </FormGrid>
        </Sheet>
      </Canvas>
      <ScrollTrack>
        <ScrollButton aria-label="Scroll down">
          <svg width="8" height="5"><path d="M1 1h8L5 5z" fill="#fff" /><path d="M0 0h7L3.500 4z" fill="#77736b" /></svg>
        </ScrollButton>
      </ScrollTrack>
    </WorkArea>
  );
}

export default function App() {
  return (
    <Page>
      <GlobalStyle />
      <WindowFrame>
        <AppHeader />
        <Body>
          <AppRibbon />
          <Designer />
          <StatusBar>
            <span>Publish location: C:\Users\Administrator\Desktop\GeneralDirectorAppove...</span>
            <GripIcon />
          </StatusBar>
        </Body>
      </WindowFrame>
    </Page>
  );
}
